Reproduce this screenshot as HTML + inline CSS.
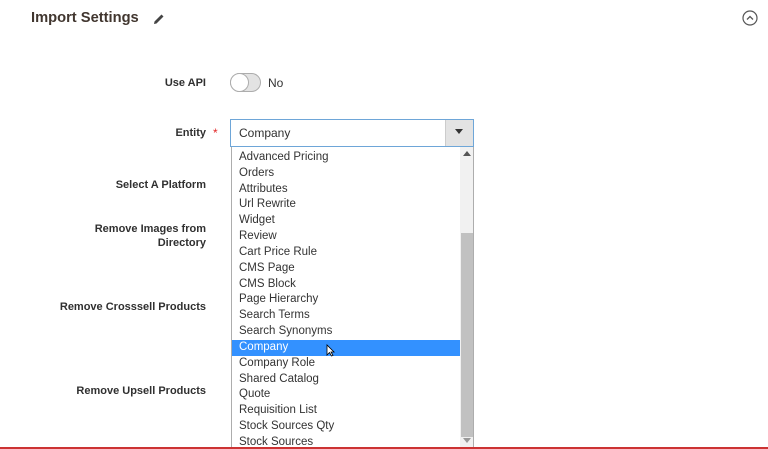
<!DOCTYPE html>
<html><head><meta charset="utf-8"><style>
*{margin:0;padding:0;box-sizing:border-box}
body{width:768px;height:449px;overflow:hidden;background:#fff;font-family:"Liberation Sans",sans-serif;position:relative;color:#303030}
.a{position:absolute}
.lbl{position:absolute;font-size:11px;font-weight:bold;color:#303030;text-align:right;width:200px;left:6px;line-height:14px}
.list{position:absolute;left:231px;top:147px;width:243px;height:302px;border:1px solid #adadad;border-top:none;background:#fff;overflow:hidden}
.it{height:15.83px;line-height:15.83px;font-size:11.5px;padding-left:7px;color:#333;width:228px}
.sel{background:#3391ff;color:#fff}
</style></head><body>
<div class="a" style="left:31px;top:10px;font-size:14.7px;font-weight:bold;color:#41362f">Import Settings</div>
<svg class="a" style="left:153px;top:13px" width="12" height="12" viewBox="0 0 12 12"><path d="M1 11 L1.5 8.5 L8.5 1.5 L10.5 3.5 L3.5 10.5 Z" fill="#444"/></svg>
<svg class="a" style="left:742px;top:10px" width="16" height="16" viewBox="0 0 16 16"><circle cx="8" cy="8" r="7" fill="none" stroke="#555" stroke-width="1.2"/><path d="M5 9.5 L8 6.5 L11 9.5" fill="none" stroke="#555" stroke-width="1.3"/></svg>

<div class="lbl" style="top:76px">Use API</div>
<div class="a" style="left:230px;top:73px;width:31px;height:19px;border:1px solid #adadad;border-radius:10px;background:#e3e3e3"></div>
<div class="a" style="left:230px;top:73px;width:19px;height:19px;border:1px solid #adadad;border-radius:50%;background:#fff"></div>
<div class="a" style="left:268px;top:76px;font-size:12px;color:#333">No</div>

<div class="lbl" style="top:126px">Entity</div>
<div class="a" style="left:213px;top:126px;color:#e22626;font-size:12px">*</div>
<div class="a" style="left:230px;top:119px;width:244px;height:28px;border:1px solid #6ea6d8;background:#fff"></div>
<div class="a" style="left:445px;top:120px;width:28px;height:26px;background:#e3e3e3;border-left:1px solid #ccc"></div>
<svg class="a" style="left:455px;top:129px" width="8" height="6"><path d="M0 0H8L4 5Z" fill="#333"/></svg>
<div class="a" style="left:239px;top:126px;font-size:12px;color:#303030">Company</div>

<div class="lbl" style="top:178px">Select A Platform</div>
<div class="lbl" style="top:222px">Remove Images from<br>Directory</div>
<div class="lbl" style="top:300px">Remove Crosssell Products</div>
<div class="lbl" style="top:384px">Remove Upsell Products</div>

<div class="list">
<div class="it" style="margin-top:3px">Advanced Pricing</div><div class="it">Orders</div><div class="it">Attributes</div><div class="it">Url Rewrite</div><div class="it">Widget</div><div class="it">Review</div><div class="it">Cart Price Rule</div><div class="it">CMS Page</div><div class="it">CMS Block</div><div class="it">Page Hierarchy</div><div class="it">Search Terms</div><div class="it">Search Synonyms</div><div class="it sel">Company</div><div class="it">Company Role</div><div class="it">Shared Catalog</div><div class="it">Quote</div><div class="it">Requisition List</div><div class="it">Stock Sources Qty</div><div class="it">Stock Sources</div>
<div class="a" style="left:228px;top:0;width:14px;height:302px;background:#f1f1f1"></div>
<div class="a" style="left:229px;top:86px;width:12px;height:204px;background:#c1c1c1"></div>
<svg class="a" style="left:231px;top:4px" width="8" height="5"><path d="M0 5H8L4 0Z" fill="#555"/></svg>
<svg class="a" style="left:231px;top:291px" width="8" height="5"><path d="M0 0H8L4 5Z" fill="#999"/></svg>
</div>
<svg class="a" style="left:326px;top:344px" width="9" height="13"><path d="M1 1V11L3.5 8.5L5.5 12L7 11.3L5 8H8Z" fill="#fff" stroke="#000" stroke-width="0.8"/></svg>
<div class="a" style="left:0;top:447px;width:768px;height:2px;background:#c33"></div>
</body></html>
